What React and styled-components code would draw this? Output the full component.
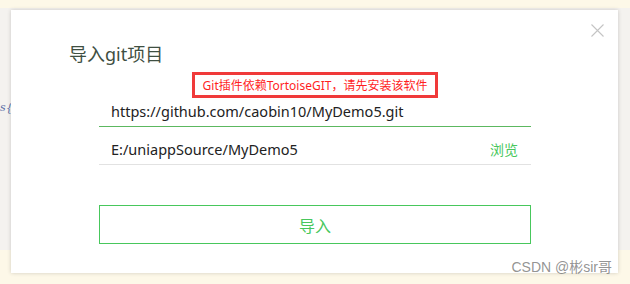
import styled, { createGlobalStyle } from "styled-components";

const GlobalStyle = createGlobalStyle`
  html, body {
    margin: 0;
    padding: 0;
    background: #fdf8e8;
  }
  * {
    box-sizing: border-box;
  }
`;

const green = "#48c75c";

const App = () => {
  return (
    <>
      <GlobalStyle />
      <Page>
        <TopBand />
        <Editor>
          <CodeBit>s&#123;</CodeBit>
        </Editor>
        <BottomBand />

        <Dialog>
          <Close aria-label="close">
            <svg width="13" height="13" viewBox="0 0 13 13">
              <path d="M0.5 0.5 L12.5 12.5 M12.5 0.5 L0.5 12.5" stroke="#c4c4c4" strokeWidth="1.1" fill="none" />
            </svg>
          </Close>
          <Title>导入git项目</Title>
          <Form>
            <Field $active>
              <FieldText>https://github.com/caobin10/MyDemo5.git</FieldText>
            </Field>
            <Field>
              <FieldText>E:/uniappSource/MyDemo5</FieldText>
              <Browse>浏览</Browse>
            </Field>
            <ImportButton>导入</ImportButton>
          </Form>
          {/* red annotation drawn over the screenshot */}
          <Note>Git插件依赖TortoiseGIT，请先安装该软件</Note>
        </Dialog>

        <Watermark>CSDN @彬sir哥</Watermark>
      </Page>
    </>
  );
};

const Page = styled.div`
  position: relative;
  width: 630px;
  height: 284px;
  display: flex;
  flex-direction: column;
  overflow: hidden;
  font-family: "Noto Sans", "Noto Sans CJK SC", sans-serif;
`;

const TopBand = styled.div`
  height: 8px;
  background: #fdf8e8;
`;

const Editor = styled.div`
  height: 242px;
  background: #f4f2ef;
  padding-top: 93px;
`;

const BottomBand = styled.div`
  flex: 1;
  background: #fdf8e8;
`;

const CodeBit = styled.span`
  display: block;
  margin-left: 0;
  font-family: "DejaVu Serif", serif;
  font-style: italic;
  font-size: 11px;
  color: #5b6fa6;
`;

const Dialog = styled.div`
  position: absolute;
  left: 11px;
  top: 10px;
  width: 607px;
  height: 263px;
  background: #fff;
  box-shadow: 0 0 4px rgba(0, 0, 0, 0.18);
  padding: 32px 0 0 58px;
`;

const Close = styled.div`
  position: absolute;
  right: 14px;
  top: 14px;
  width: 13px;
  height: 13px;
  display: flex;
`;

const Title = styled.h2`
  margin: 0;
  font-weight: normal;
  font-size: 18px;
  line-height: 24px;
  color: #3f4f42;
`;

const Form = styled.div`
  width: 432px;
  margin: 23px 0 0 30px;
  display: flex;
  flex-direction: column;
`;

const Field = styled.div`
  height: 38px;
  padding: 6px 13px 0 12px;
  display: flex;
  align-items: center;
  justify-content: space-between;
  border-bottom: 1px solid ${({ $active }) => ($active ? "#5cb860" : "#e2e2e2")};
`;

const FieldText = styled.span`
  font-size: 14.5px;
  color: #222;
`;

const Browse = styled.span`
  font-size: 14px;
  color: ${green};
`;

const ImportButton = styled.button`
  margin-top: 40px;
  height: 39px;
  border: 1px solid ${green};
  background: #fff;
  color: ${green};
  font-family: inherit;
  font-size: 16px;
  cursor: pointer;
`;

const Note = styled.div`
  position: absolute;
  left: 181px;
  top: 62px;
  width: 246px;
  height: 26px;
  border: 3px solid #f03a3a;
  display: flex;
  align-items: center;
  justify-content: center;
  font-size: 12px;
  color: #ff1f1f;
  background: #fff;
`;

const Watermark = styled.div`
  position: absolute;
  right: 18px;
  bottom: 8px;
  font-family: "Liberation Sans", "Noto Sans CJK SC", sans-serif;
  font-size: 14px;
  color: rgba(120, 120, 120, 0.8);
`;

export default App;
